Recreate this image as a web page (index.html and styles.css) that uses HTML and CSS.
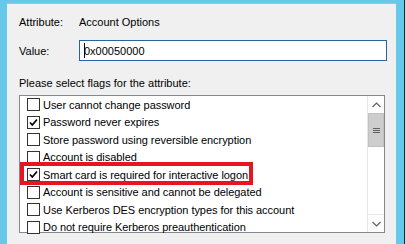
FILE: index.html
```html
<!DOCTYPE html>
<html lang="en">
<head>
  <meta charset="UTF-8">
  <title>Account Options</title>
  <link rel="stylesheet" href="styles.css">
</head>
<body>
  <div class="frame">
    <div class="panel">
      <div class="field">
        <span class="label">Attribute:</span>
        <span class="value-text">Account Options</span>
      </div>
      <div class="field field-value">
        <span class="label">Value:</span>
        <div class="input"><span class="caret"></span>0x00050000</div>
      </div>
      <div class="prompt">Please select flags for the attribute:</div>

      <div class="listbox">
        <ul class="flags">
          <li><span class="box"></span>User cannot change password</li>
          <li><span class="box"><svg width="11" height="11" viewBox="0 0 11 11"><path d="M2 5.5 L4.3 8 L9 2.5" fill="none" stroke="#000" stroke-width="1.7"/></svg></span>Password never expires</li>
          <li><span class="box"></span>Store password using reversible encryption</li>
          <li><span class="box"></span>Account is disabled</li>
          <li class="marked"><span class="box"><svg width="11" height="11" viewBox="0 0 11 11"><path d="M2 5.5 L4.3 8 L9 2.5" fill="none" stroke="#000" stroke-width="1.7"/></svg></span>Smart card is required for interactive logon</li>
          <li><span class="box"></span>Account is sensitive and cannot be delegated</li>
          <li><span class="box"></span>Use Kerberos DES encryption types for this account</li>
          <li><span class="box"></span>Do not require Kerberos preauthentication</li>
        </ul>
        <div class="scrollbar">
          <div class="arrow">
            <svg width="9" height="6" viewBox="0 0 9 6"><path d="M0.5 5 L4.5 1 L8.5 5" fill="none" stroke="#606060" stroke-width="1.2"/></svg>
          </div>
          <div class="thumb"><span class="grip"></span></div>
          <div class="track"></div>
          <div class="arrow">
            <svg width="9" height="6" viewBox="0 0 9 6"><path d="M0.5 1 L4.5 5 L8.5 1" fill="none" stroke="#606060" stroke-width="1.2"/></svg>
          </div>
        </div>
      </div>
    </div>
  </div>
</body>
</html>
```

FILE: styles.css
```css
*, *::before, *::after {
  box-sizing: border-box;
}

body {
  margin: 0;
  width: 405px;
  height: 244px;
  overflow: hidden;
  font-family: 'Liberation Sans', Arial, sans-serif;
  font-size: 11px;
  color: #000;
}

.frame {
  height: 244px;
  background: #66c9ea;
  padding: 3px 8px 0 7px;
  border-right: 1px solid #1c2a36;
}

.panel {
  height: 241px;
  background: #f0f0f0;
  border-top: 1px solid #a9bfd6;
  padding: 10px 0 0 12px;
}

.field {
  display: flex;
  align-items: center;
  height: 16px;
}

.label {
  width: 60px;
}

.field-value {
  margin-top: 10px;
  height: 21px;
}

.input {
  width: 308px;
  height: 21px;
  background: #fff;
  border: 1px solid #2a64a0;
  padding-left: 4px;
  display: flex;
  align-items: center;
}

.caret {
  width: 1px;
  height: 15px;
  background: #000;
  margin-right: -1px;
}

.prompt {
  margin-top: 14px;
  height: 16px;
  display: flex;
  align-items: center;
}

.listbox {
  margin-top: 4px;
  width: 366px;
  height: 138px;
  border: 1px solid #828790;
  background: #fff;
  display: flex;
}

.flags {
  list-style: none;
  margin: 0;
  padding: 0;
  flex: 1;
  letter-spacing: -0.05px;
}

.flags li {
  height: 17.5px;
  display: flex;
  align-items: center;
  padding-left: 7px;
  white-space: nowrap;
}

.box {
  width: 13px;
  height: 13px;
  border: 1px solid #333;
  background: #fff;
  margin-right: 3px;
  display: flex;
}

.flags li.marked {
  position: relative;
}

.flags li.marked::before {
  content: "";
  position: absolute;
  left: 0;
  top: -4px;
  width: 233px;
  height: 23px;
  border: 4px solid #e8141f;
}

.scrollbar {
  width: 17px;
  display: flex;
  flex-direction: column;
  background: #fff;
  border-left: 1px solid #e6e6e6;
}

.arrow {
  height: 17px;
  display: flex;
  align-items: center;
  justify-content: center;
}

.thumb {
  height: 34px;
  background: #cdcdcd;
  border: 1px solid #c0c0c0;
  display: flex;
  align-items: center;
  justify-content: center;
}

.grip {
  width: 7px;
  height: 5px;
  border-top: 1px solid #606060;
  border-bottom: 1px solid #606060;
  position: relative;
}

.grip::after {
  content: "";
  position: absolute;
  left: 0;
  right: 0;
  top: 1px;
  border-top: 1px solid #606060;
}

.track {
  flex: 1;
  border-bottom: 1px solid #e6e6e6;
}
```
